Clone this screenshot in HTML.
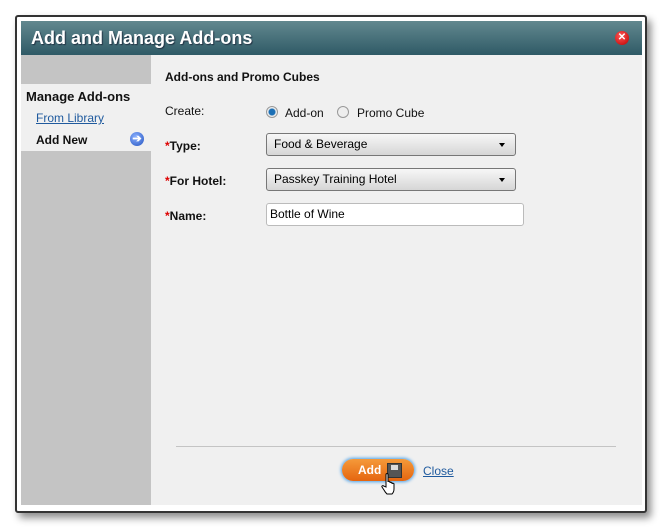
<!DOCTYPE html>
<html><head><style>
body{margin:0;width:662px;height:527px;background:#fff;font-family:"Liberation Sans",sans-serif;position:relative;overflow:hidden}
.outer{position:absolute;left:15px;top:15px;width:628px;height:494px;border:2px solid #333;border-radius:3px;background:#fff;box-shadow:4px 5px 8px rgba(0,0,0,.45)}
.hdr{position:absolute;left:21px;top:21px;width:621px;height:34px;background:linear-gradient(#62888f,#2f5a66);color:#fff;font-weight:bold;font-size:18px;line-height:34px;text-indent:10px;text-shadow:1px 1px 1px #234}
.x{position:absolute;left:615px;top:31px;width:14px;height:14px;border-radius:50%;background:radial-gradient(circle at 40% 35%,#f55,#b00);color:#fff;font-size:10px;line-height:14px;text-align:center;font-weight:bold}
.side{position:absolute;left:21px;top:55px;width:130px;height:450px;background:#c4c4c4}
.sw{position:absolute;left:21px;top:84px;width:130px;height:67px;background:#f0f0f0}
.main{position:absolute;left:151px;top:55px;width:491px;height:450px;background:#f0f0f0}
.t{position:absolute;font-size:12px;color:#111;white-space:nowrap}
.b{font-weight:bold}
.r{color:#d00}
.sel{position:absolute;left:266px;width:248px;height:21px;border:1px solid #777;border-radius:3px;background:linear-gradient(#f7f7f7,#d6d6d6);font-size:12px;line-height:21px;text-indent:7px}
.sel:after{content:"";position:absolute;right:10px;top:9px;border:3px solid transparent;border-top:4px solid #000}
.rad{position:absolute;width:10px;height:10px;border:1px solid #999;border-radius:50%;background:#eee}
</style></head><body>
<div class="outer"></div>
<div class="hdr">Add and Manage Add-ons</div>
<div class="x">✕</div>
<div class="side"></div><div class="sw"></div>
<div class="main"></div>
<div class="t b" style="left:26px;top:89px;font-size:13px">Manage Add-ons</div>
<div class="t" style="left:36px;top:111px;color:#1f5a9e;text-decoration:underline">From Library</div>
<div class="t b" style="left:36px;top:133px">Add New</div>
<div style="position:absolute;left:130px;top:132px;width:14px;height:14px;border-radius:50%;background:radial-gradient(circle at 40% 35%,#8ab0ff,#2454c0);color:#fff;font-size:11px;line-height:14px;text-align:center;font-weight:bold">➔</div>
<div class="t b" style="left:165px;top:70px">Add-ons and Promo Cubes</div>
<div class="t" style="left:165px;top:104px">Create:</div>
<div class="rad" style="left:266px;top:106px;background:radial-gradient(circle,#1b6fb5 3px,#eee 4px)"></div>
<div class="t" style="left:285px;top:106px">Add-on</div>
<div class="rad" style="left:337px;top:106px"></div>
<div class="t" style="left:357px;top:106px">Promo Cube</div>
<div class="t b" style="left:165px;top:139px"><span class="r">*</span>Type:</div>
<div class="sel" style="top:133px">Food &amp; Beverage</div>
<div class="t b" style="left:165px;top:174px"><span class="r">*</span>For Hotel:</div>
<div class="sel" style="top:168px">Passkey Training Hotel</div>
<div class="t b" style="left:165px;top:209px"><span class="r">*</span>Name:</div>
<div style="position:absolute;left:266px;top:203px;width:256px;height:21px;border:1px solid #bbb;border-radius:3px;background:#fff;font-size:12px;line-height:21px;text-indent:3px">Bottle of Wine</div>
<div style="position:absolute;left:176px;top:446px;width:440px;height:1px;background:#c4c4c4"></div>
<div style="position:absolute;left:342px;top:459px;width:72px;height:22px;border-radius:12px;background:linear-gradient(#f59a3a,#e5650f);box-shadow:0 0 3px 1px #4aa0e8;color:#fff;font-weight:bold;font-size:12px;line-height:22px;text-indent:16px">Add</div>
<div style="position:absolute;left:387px;top:463px;width:13px;height:13px;background:#555;border:1px solid #333"><div style="margin:1px 3px;height:5px;background:#ddd"></div></div>
<div class="t" style="left:423px;top:464px;color:#1f5a9e;text-decoration:underline">Close</div>
<svg style="position:absolute;left:381px;top:472px" width="18" height="24" viewBox="0 0 18 24"><path d="M5 2.5c0-1.2 2-1.2 2 0V10c0-1 2-1 2 0v1c0-1 2-1 2 0v1c0-1 2-1 2 0v5c0 2-1 4-2 5H6c-1-1-2-2-3-4l-2-3c-.6-1 .8-1.8 1.6-1L5 15z" fill="#fff" stroke="#000" stroke-width="1"/></svg>
</body></html>
